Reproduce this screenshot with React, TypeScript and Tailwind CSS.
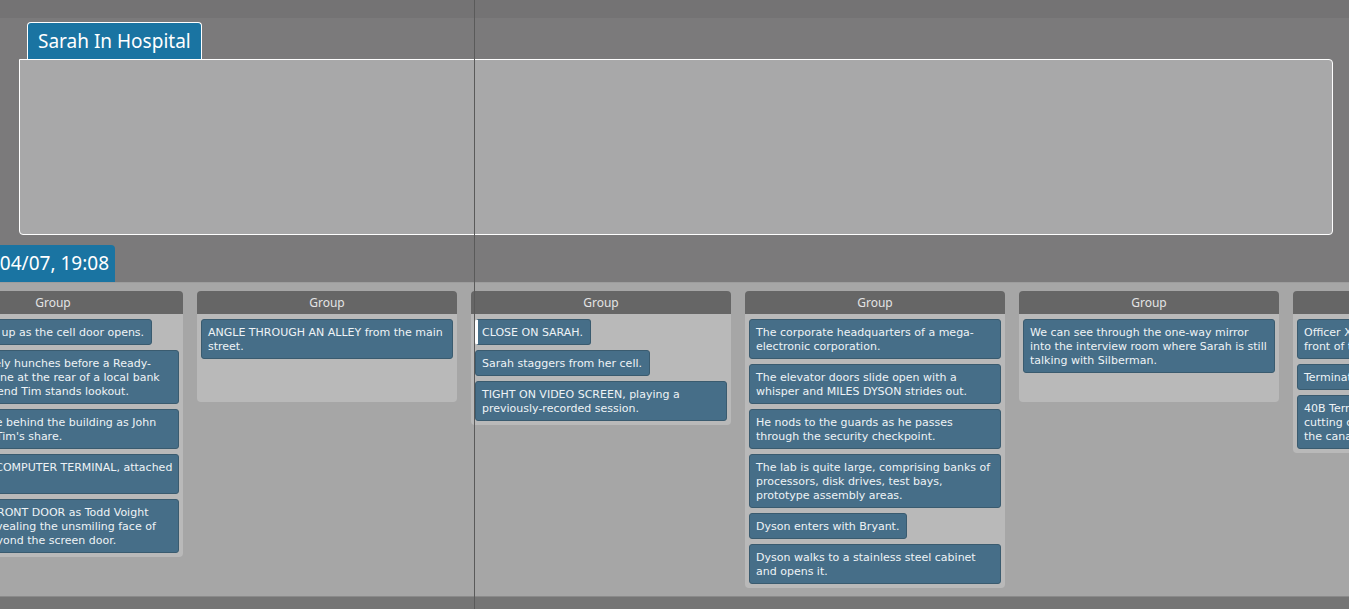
import React from 'react';

type Column = { cards: { text: string; inline?: boolean; selected?: boolean }[] };

const columns: Column[] = [
  {
    cards: [
      { text: 'Sarah looks up as the cell door opens.', inline: true },
      { text: 'John, furtively hunches before a Ready-Teller machine at the rear of a local bank while his friend Tim stands lookout.' },
      { text: 'On that lane behind the building as John counts out Tim\'s share.' },
      { text: 'ANGLE ON COMPUTER TERMINAL, attached to it.' },
      { text: 'ON THEIR FRONT DOOR as Todd Voight opens it, revealing the unsmiling face of the T-80 beyond the screen door.' },
    ],
  },
  { cards: [{ text: 'ANGLE THROUGH AN ALLEY from the main street.' }] },
  {
    cards: [
      { text: 'CLOSE ON SARAH.', inline: true, selected: true },
      { text: 'Sarah staggers from her cell.', inline: true },
      { text: 'TIGHT ON VIDEO SCREEN, playing a previously-recorded session.' },
    ],
  },
  {
    cards: [
      { text: 'The corporate headquarters of a mega-electronic corporation.' },
      { text: 'The elevator doors slide open with a whisper and MILES DYSON strides out.' },
      { text: 'He nods to the guards as he passes through the security checkpoint.' },
      { text: 'The lab is quite large, comprising banks of processors, disk drives, test bays, prototype assembly areas.' },
      { text: 'Dyson enters with Bryant.', inline: true },
      { text: 'Dyson walks to a stainless steel cabinet and opens it.' },
    ],
  },
  {
    cards: [
      { text: 'We can see through the one-way mirror into the interview room where Sarah is still talking with Silberman.' },
    ],
  },
  {
    cards: [
      { text: 'Officer Xavier stands on the porch just in front of the house.' },
      { text: 'Terminator rides away.', inline: true },
      { text: '40B Terminator guns the motorcycle, cutting clear across the lot and down to the canal.' },
    ],
  },
];

const GroupColumn: React.FC<{ column: Column }> = ({ column }) => (
  <div className="w-[260px] shrink-0">
    <div className="h-[23px] rounded-t-[4px] bg-[#666666] text-center text-[12px] leading-[23px] text-[#e4e4e4] font-['Noto_Sans',sans-serif]">
      Group
    </div>
    <div className="min-h-[88px] rounded-b-[4px] bg-[#b9b9b9] px-[4px] pt-[5px] pb-[4px] flex flex-col items-start gap-[5px]">
      {column.cards.map((card, i) => (
        <div
          key={i}
          className={`${card.inline ? 'self-start pr-[7px]' : 'self-stretch pr-[4px]'} rounded-[3px] border border-[#3a5b6f] bg-[#466e88] pt-[6px] pb-[4px] text-[11px] leading-[14px] text-[#eef3f6] ${
            card.selected ? 'border-l-[3px] border-l-white pl-[4px]' : 'pl-[6px]'
          }`}
        >
          {card.text}
        </div>
      ))}
    </div>
  </div>
);

export default function App() {
  return (
    <div className="relative h-[609px] w-full overflow-hidden bg-[#7b7a7b] font-['DejaVu_Sans',sans-serif]">
      <div className="h-[18px] bg-[#747374]" />

      <div className="pl-[19px] pr-[16px] pt-[4px]">
        <div className="ml-[8px] inline-block rounded-t-[4px] border border-b-0 border-white bg-[#1a74a2] px-[10px] h-[37px] text-[19px] leading-[36px] text-white font-['Noto_Sans',sans-serif]">
          Sarah In Hospital
        </div>
        <div className="h-[176px] rounded-[4px] rounded-tl-none border border-white bg-[#a8a8a9]" />
      </div>

      <div className="mt-[10px] flex h-[37px] w-[115px] justify-end overflow-hidden rounded-tr-[4px] bg-[#1a74a2] pr-[6px]">
        <span className="whitespace-nowrap text-[19px] leading-[37px] text-white font-['Noto_Sans',sans-serif]">
          Wed 12/04/07, 19:08
        </span>
      </div>

      <div className="h-[314px] border-t border-[#9d9d9d] bg-[#a6a6a6] pt-[8px]">
        <div className="ml-[-77px] flex items-start gap-[14px]">
          {columns.map((c, i) => (
            <GroupColumn key={i} column={c} />
          ))}
        </div>
      </div>

      <div className="h-[13px] border-t border-[#8a8a8a] bg-[#757575]" />

      <div className="pointer-events-none absolute top-0 bottom-0 left-[474px] w-px bg-[#5a5a5a]" />
    </div>
  );
}
